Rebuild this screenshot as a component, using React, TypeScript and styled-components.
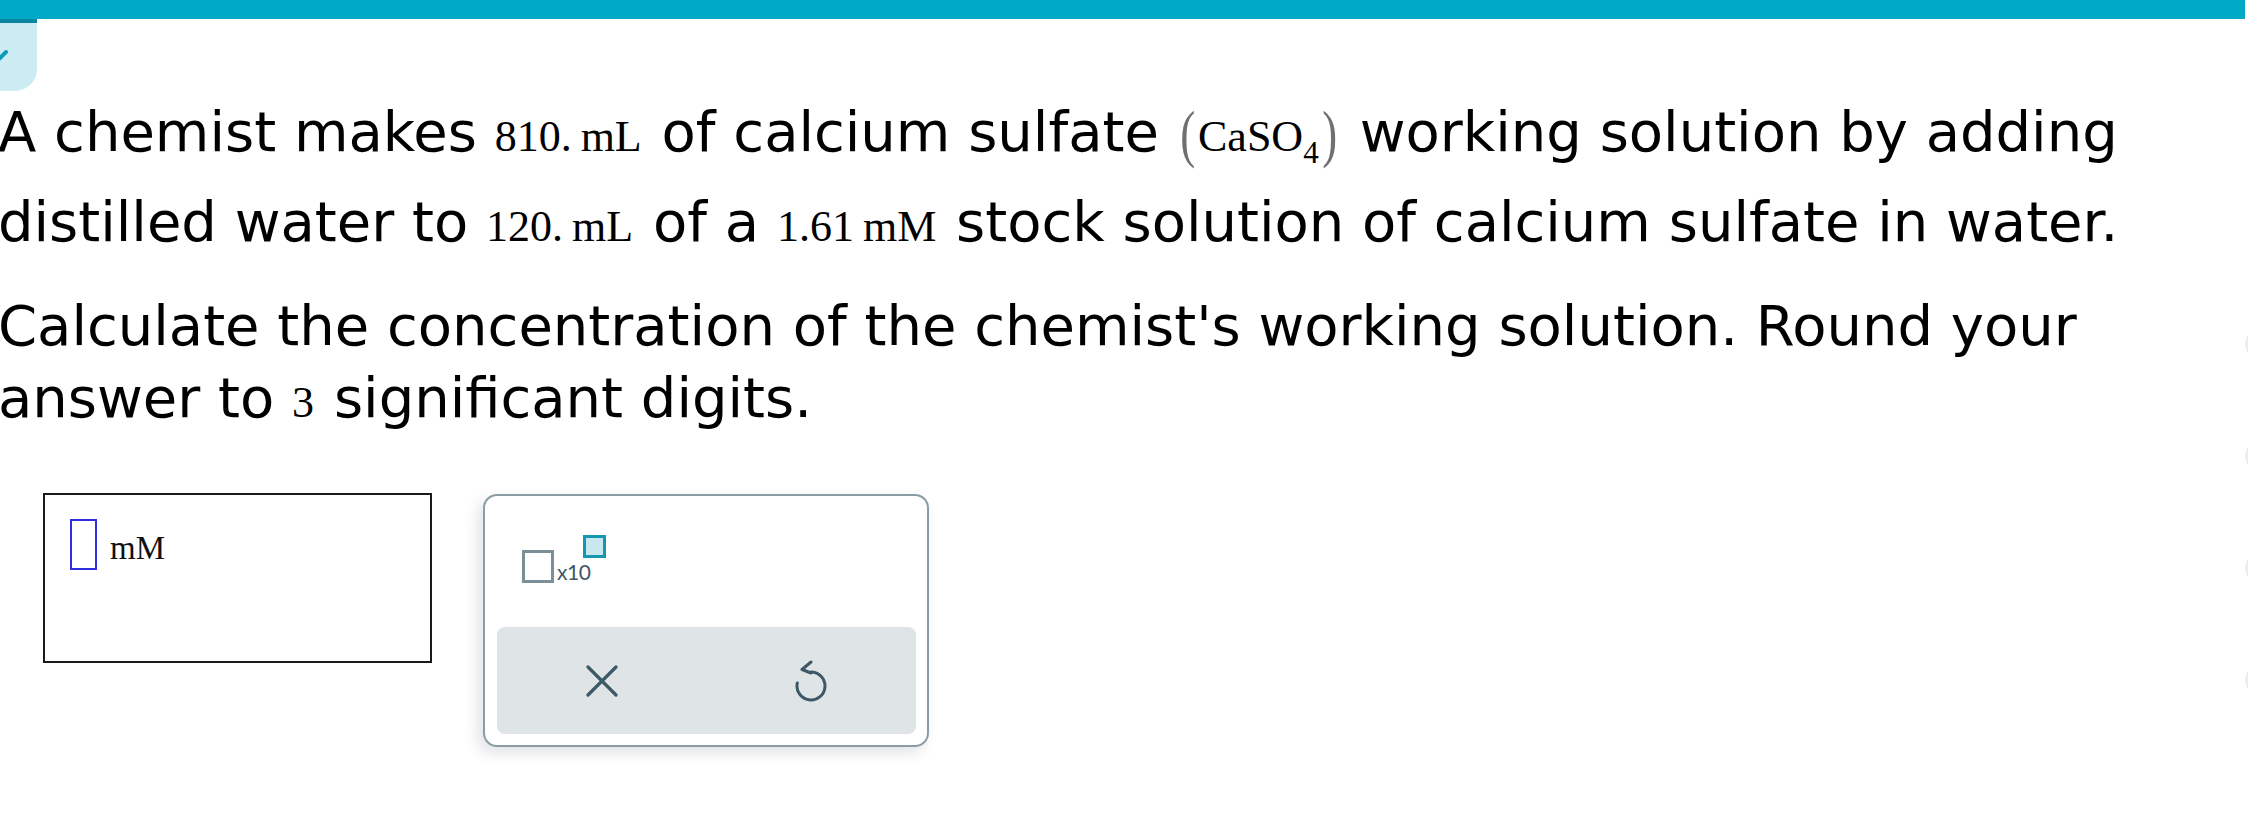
import React from 'react'
import styled, { createGlobalStyle } from 'styled-components'

const GlobalStyle = createGlobalStyle`
  html, body {
    margin: 0;
    padding: 0;
    background: #ffffff;
    overflow: hidden;
  }
`

const Page = styled.div`
  display: flex;
  flex-direction: row;
  width: 2248px;
  height: 830px;
  overflow: hidden;
`

const Main = styled.main`
  flex: 1;
  min-width: 0;
  display: flex;
  flex-direction: column;
`

const TopBar = styled.div`
  height: 19px;
  background: #00aac7;
`

const Tab = styled.div`
  width: 37px;
  height: 46px;
  border-top: 4px solid #0b86a0;
  background: #cdebf2;
  border-bottom-right-radius: 22px;
  display: flex;
  align-items: flex-start;
  padding-top: 22px;
  overflow: hidden;
`

const Prompt = styled.div`
  width: 2160px;
  margin: -4px 0 0 -2px;
  font-family: 'DejaVu Sans', Verdana, sans-serif;
  font-size: 56px;
  color: #000;
`

const Para = styled.p<{ $lh: number; $gap?: number }>`
  margin: ${(p) => p.$gap ?? 0}px 0 0 0;
  line-height: ${(p) => p.$lh}px;
`

const MathText = styled.span`
  font-family: 'Liberation Serif', 'Times New Roman', serif;
  font-size: 44px;
  line-height: 1;
  padding: 0 2px 0 0;
  white-space: nowrap;
`

const Unit = styled.span`
  margin-left: 9px;
`

const Paren = styled.span`
  font-family: 'Liberation Serif', serif;
  font-size: 64px;
  line-height: 0;
  color: #707070;
  display: inline-block;
  transform: scaleX(0.7);
  vertical-align: -4px;
`

const Sub = styled.span`
  font-size: 31px;
  line-height: 0;
  vertical-align: -12px;
`

const AnswerRow = styled.div`
  display: flex;
  align-items: flex-start;
  gap: 51px;
  margin: 59px 0 0 43px;
`

const AnswerBox = styled.div`
  width: 389px;
  height: 170px;
  box-sizing: border-box;
  border: 2px solid #1a1a1a;
  padding: 24px 0 0 25px;
  display: flex;
  align-items: flex-start;
  gap: 13px;
`

const Blank = styled.div`
  width: 27px;
  height: 51px;
  box-sizing: border-box;
  border: 2px solid #2f2fe0;
`

const UnitLabel = styled.span`
  font-family: 'Liberation Serif', 'Times New Roman', serif;
  font-size: 33px;
  line-height: 33px;
  margin-top: 13px;
  color: #111;
`

const Keypad = styled.div`
  margin-top: 1px;
  width: 446px;
  height: 253px;
  box-sizing: border-box;
  border: 2px solid #8a9da4;
  border-radius: 14px;
  background: #fff;
  box-shadow: -5px 6px 14px rgba(40, 60, 70, 0.14);
  padding: 0 11px 11px 12px;
  display: flex;
  flex-direction: column;
`

const KeypadTop = styled.div`
  height: 131px;
  padding: 39px 0 0 25px;
  box-sizing: border-box;
`

const ExpButton = styled.div`
  display: inline-flex;
  align-items: flex-start;
`

const BaseSquare = styled.div`
  width: 32px;
  height: 33px;
  box-sizing: border-box;
  border: 3px solid #7c8f97;
  margin-top: 15px;
`

const TimesTen = styled.span`
  font-family: Lato, 'Open Sans', sans-serif;
  font-size: 21px;
  line-height: 21px;
  color: #40566a;
  margin: 26px 0 0 3px;
  letter-spacing: -0.5px;
`

const ExpSquare = styled.div`
  width: 23px;
  height: 23px;
  box-sizing: border-box;
  border: 3px solid #1497b0;
  background: #c8e7ef;
  margin-left: -7px;
`

const KeyTray = styled.div`
  flex: 1;
  background: #dfe5e7;
  border-radius: 8px;
  display: grid;
  grid-template-columns: 1fr 1fr;
  align-items: center;
  justify-items: center;
`

const KeyButton = styled.button`
  border: none;
  background: transparent;
  padding: 0;
  display: flex;
  align-items: center;
  justify-content: center;
`

const Rail = styled.aside`
  width: 3px;
  overflow: hidden;
  display: flex;
  flex-direction: column;
  gap: 80px;
  padding-top: 328px;
`

const RailDot = styled.div`
  width: 32px;
  height: 32px;
  flex: none;
  border-radius: 50%;
  background: #ececec;
`

const Chevron = () => (
  <svg width="24" height="24" viewBox="0 0 24 24" style={{ marginLeft: -14 }}>
    <path d="M4 7 L12 15 L20 7" fill="none" stroke="#0a9dbb" strokeWidth="4" strokeLinecap="round" />
  </svg>
)

const ClearIcon = () => (
  <svg width="32" height="32" viewBox="0 0 32 32">
    <path d="M2 2 L30 30 M30 2 L2 30" stroke="#3d5866" strokeWidth="3.2" strokeLinecap="round" />
  </svg>
)

const UndoIcon = () => (
  <svg width="36" height="42" viewBox="0 0 36 42">
    <path
      d="M18 12 A14 14 0 1 1 4.3 23"
      fill="none"
      stroke="#3d5866"
      strokeWidth="3"
      strokeLinecap="round"
    />
    <path
      d="M18 2 L9 9.5 L18 13"
      fill="none"
      stroke="#3d5866"
      strokeWidth="3"
      strokeLinecap="round"
      strokeLinejoin="round"
    />
  </svg>
)

export default function App() {
  return (
    <>
      <GlobalStyle />
      <Page>
        <Main>
          <TopBar />
          <Tab>
            <Chevron />
          </Tab>

          {/* enunciado */}
          <Prompt>
            <Para $lh={90}>
              A chemist makes{' '}
              <MathText>
                810.<Unit>mL</Unit>
              </MathText>{' '}
              of calcium sulfate{' '}
              <MathText>
                <Paren>(</Paren>CaSO<Sub>4</Sub>
                <Paren>)</Paren>
              </MathText>{' '}
              working solution by adding distilled water to{' '}
              <MathText>
                120.<Unit>mL</Unit>
              </MathText>{' '}
              of a{' '}
              <MathText>
                1.61<Unit>mM</Unit>
              </MathText>{' '}
              stock solution of calcium sulfate in water.
            </Para>
            <Para $lh={72} $gap={23}>
              Calculate the concentration of the chemist's working solution. Round your answer to{' '}
              <MathText>3</MathText> significant digits.
            </Para>
          </Prompt>

          {/* resposta e teclado */}
          <AnswerRow>
            <AnswerBox>
              <Blank />
              <UnitLabel>mM</UnitLabel>
            </AnswerBox>

            <Keypad>
              <KeypadTop>
                <ExpButton>
                  <BaseSquare />
                  <TimesTen>x10</TimesTen>
                  <ExpSquare />
                </ExpButton>
              </KeypadTop>
              <KeyTray>
                <KeyButton name="clear" type="button">
                  <ClearIcon />
                </KeyButton>
                <KeyButton name="undo" type="button">
                  <UndoIcon />
                </KeyButton>
              </KeyTray>
            </Keypad>
          </AnswerRow>
        </Main>
        <Rail>
          <RailDot />
          <RailDot />
          <RailDot />
          <RailDot />
        </Rail>
      </Page>
    </>
  )
}
